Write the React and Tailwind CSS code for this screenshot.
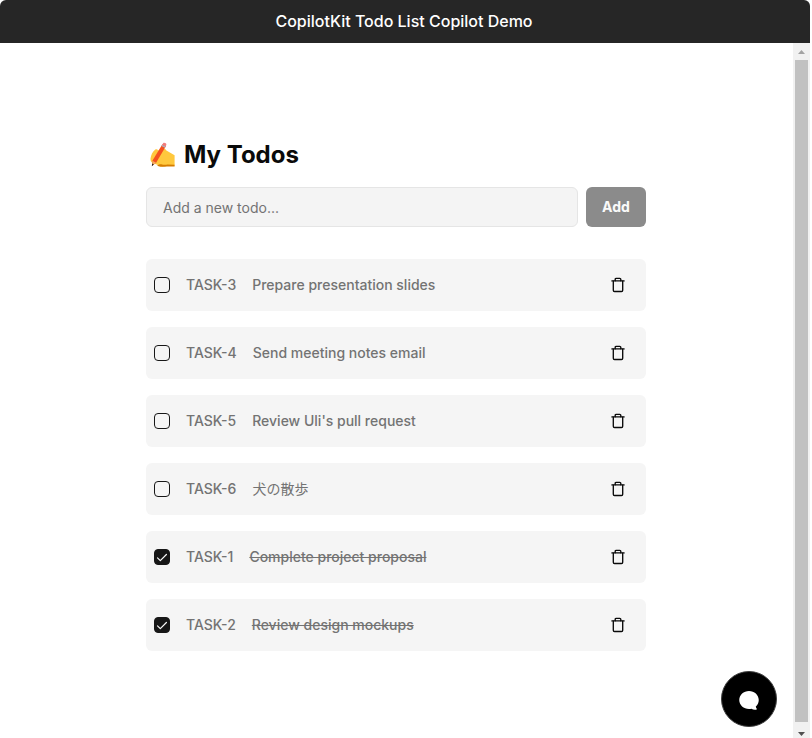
import { useState } from 'react'

const TODOS = [
  { id: 'TASK-3', title: 'Prepare presentation slides', done: false },
  { id: 'TASK-4', title: 'Send meeting notes email', done: false },
  { id: 'TASK-5', title: "Review Uli's pull request", done: false },
  { id: 'TASK-6', title: '犬の散歩', done: false, lang: 'ja' },
  { id: 'TASK-1', title: 'Complete project proposal', done: true },
  { id: 'TASK-2', title: 'Review design mockups', done: true },
]

function TrashIcon() {
  return (
    <svg width="16" height="16" viewBox="0 0 16 16" fill="none" stroke="currentColor"
         strokeWidth="1.35" strokeLinejoin="round" strokeLinecap="round">
      <path d="M1.9 3.9H14.1" />
      <path d="M5.2 3.7V2.3C5.2 1.7 5.6 1.4 6.2 1.4H9.8C10.4 1.4 10.8 1.7 10.8 2.3V3.7" />
      <path d="M3.3 4.1V13.3C3.3 14.1 3.7 14.5 4.5 14.5H11.5C12.3 14.5 12.7 14.1 12.7 13.3V4.1" />
    </svg>
  )
}

function WritingHandIcon() {
  return (
    <svg width="27" height="26" viewBox="0 0 27 26" fill="none">
      <path d="M1.5 16.5C2 13 3.5 9.5 6 7.7C7.7 7 8.6 7.4 9 8.5L13 6.8C15.2 6 16.5 7 17.4 8.4L25.6 13.2V23.6H18C15 24.6 12 24.7 10 23.6L5 21.5C2.5 20.8 1.2 19 1.5 16.5Z" fill="#ffc83d" />
      <path d="M8 23.2C10 22.8 11 22 13 22.4C15 23.2 17 22.8 18.5 22.4L25.6 22.8V24.4H18C15 25 11.5 25 9.5 24.2Z" fill="#d67d00" />
      <path d="M13.4 2.2L17 3.9L7.1 20.8L3.1 23.7L3.4 18.8Z" fill="#f4511e" />
      <path d="M14.3 1C15 .1 17.7 1.2 17.4 2.6L16.7 4.4L13.2 2.8Z" fill="#f27c7c" />
      <path d="M13.2 2.8L16.7 4.4L15.9 5.8L12.3 4Z" fill="#b4acbc" />
      <path d="M3.4 18.8L7.1 20.8L3.1 23.7Z" fill="#f3ad61" />
      <path d="M3.2 21.6L4.8 22.4L2.8 24.2Z" fill="#212121" />
    </svg>
  )
}

function Checkbox({ checked, onClick }) {
  return (
    <button
      role="checkbox"
      aria-checked={checked}
      onClick={onClick}
      className={`w-4 h-4 rounded border border-[#171717] flex items-center justify-center
                  shrink-0 text-[#fafafa] ${checked ? 'bg-[#171717]' : ''}`}
    >
      {checked && (
        <svg className="shrink-0" width="16" height="16" viewBox="0 0 16 16" fill="none"
             stroke="currentColor" strokeWidth="1.2" strokeLinecap="round" strokeLinejoin="round">
          <path d="M3.5 8.9L6.3 11.7L12.4 5.5" />
        </svg>
      )}
    </button>
  )
}

function TodoRow({ todo, onToggle, onRemove }) {
  return (
    <div className="h-[52px] px-2 bg-[#f5f5f5] rounded-md flex items-center text-sm
                    font-medium text-[#737373]">
      <Checkbox checked={todo.done} onClick={() => onToggle(todo.id)} />
      <span className="ml-4">{todo.id}</span>
      <span
        lang={todo.lang}
        className={`ml-4 flex-1 ${todo.done ? 'line-through' : ''} ${todo.lang === 'ja' ? 'font-normal' : ''}`}
      >
        {todo.title}
      </span>
      <button
        onClick={() => onRemove(todo.id)}
        aria-label={`Delete ${todo.title}`}
        className="w-10 h-10 flex items-center justify-center text-[#0a0a0a]"
      >
        <TrashIcon />
      </button>
    </div>
  )
}

function Scrollbar() {
  return (
    <div className="w-[17px] bg-[#f1f1f1] flex flex-col items-center shrink-0">
      <div className="h-[17px] w-full flex items-center justify-center text-[#a3a3a3]">
        <svg width="7" height="4" viewBox="0 0 7 4" fill="currentColor">
          <path d="M0 4L3.5 0L7 4Z" />
        </svg>
      </div>
      <div className="w-[13px] h-[662px] bg-[#c1c1c1]" />
      <div className="flex-1 w-full flex items-center justify-center text-[#505050]">
        <svg width="7" height="4" viewBox="0 0 7 4" fill="currentColor" className="mt-2">
          <path d="M0 0L3.5 4L7 0Z" />
        </svg>
      </div>
    </div>
  )
}

export default function App() {
  const [todos, setTodos] = useState(TODOS)

  const toggle = (id) =>
    setTodos(todos.map((t) => (t.id === id ? { ...t, done: !t.done } : t)))
  const remove = (id) => setTodos(todos.filter((t) => t.id !== id))

  return (
    <div className="w-[810px] h-[738px] flex flex-col overflow-hidden bg-white
                    font-[Inter,'Noto_Sans_CJK_JP',sans-serif]">
      <header className="h-[43px] shrink-0 bg-[#262626] rounded-t-md flex items-center
                         justify-center text-white text-base font-medium pr-[2px] pb-[2px]">
        CopilotKit Todo List Copilot Demo
      </header>

      <div className="flex-1 min-h-0 flex">
        <main className="flex-1 relative">
          <div className="w-[500px] ml-[146px] pt-24">
            <h1 className="h-8 flex items-center text-2xl font-bold text-[#0a0a0a]">
              <span className="ml-[3px] mr-2"><WritingHandIcon /></span>
              My Todos
            </h1>

            <div className="flex gap-2 mt-4 mb-8">
              <input
                placeholder="Add a new todo..."
                className="flex-1 h-10 px-4 text-sm bg-[#f4f4f4] border border-[#e5e5e5]
                           rounded-md placeholder:text-[#737373]"
              />
              <button
                disabled
                className="w-[60px] h-10 rounded-md bg-[#8b8b8b] text-[#fafafa] text-sm font-bold"
              >
                Add
              </button>
            </div>

            <div className="flex flex-col gap-4">
              {todos.map((todo) => (
                <TodoRow key={todo.id} todo={todo} onToggle={toggle} onRemove={remove} />
              ))}
            </div>
          </div>

          {/* Chat launcher */}
          <button
            aria-label="Open chat"
            className="absolute right-4 bottom-[11px] w-14 h-14 rounded-full bg-black text-white
                       border border-[#404040] flex items-center justify-center pt-[2px]"
          >
            <svg width="24" height="24" viewBox="0 0 24 24" fill="currentColor">
              <g transform="translate(24, 0) scale(-1, 1)">
                <path d="M5.337 21.718a6.707 6.707 0 01-.533-.074.75.75 0 01-.44-1.223 3.73 3.73 0 00.814-1.686c.023-.115-.022-.317-.254-.543C3.274 16.587 2.25 14.41 2.25 12c0-5.03 4.428-9 9.75-9s9.75 3.97 9.75 9c0 5.03-4.428 9-9.75 9-.833 0-1.643-.097-2.417-.279a6.721 6.721 0 01-4.246.997z" />
              </g>
            </svg>
          </button>
        </main>
        <Scrollbar />
      </div>
    </div>
  )
}
